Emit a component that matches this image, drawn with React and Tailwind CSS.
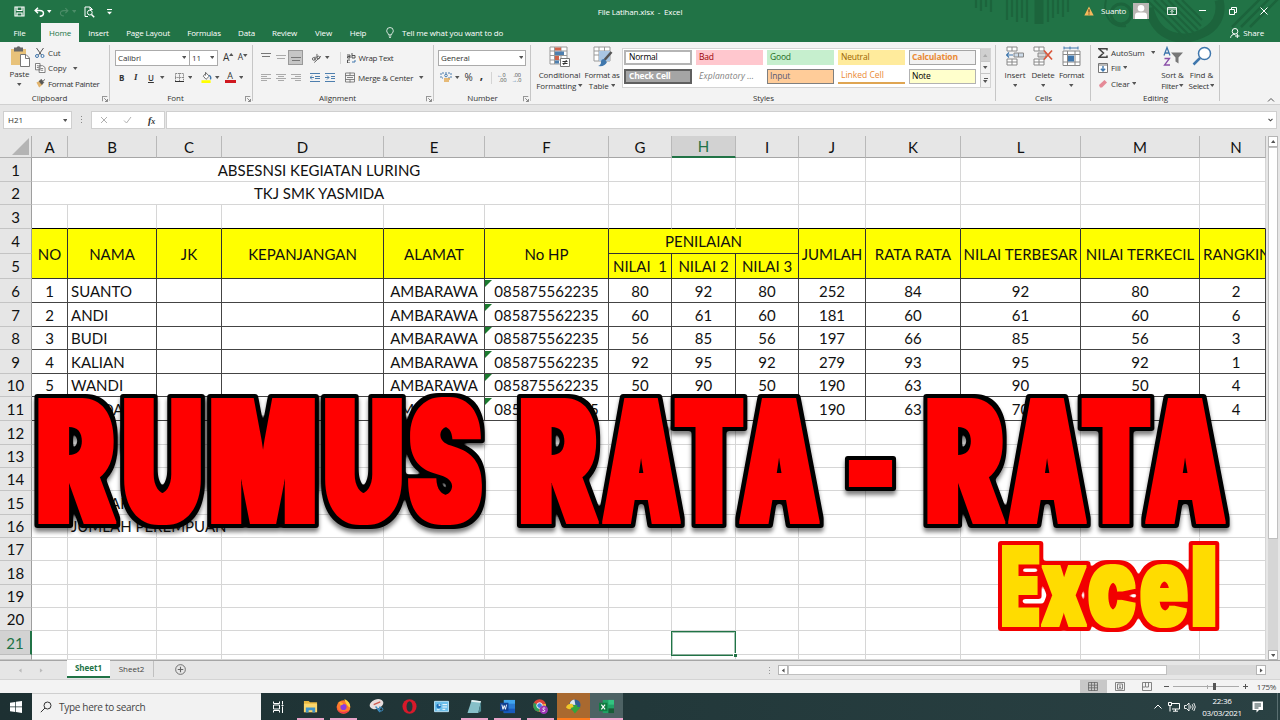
import React from "react";
import clsx from "clsx";

const UI = "font-['Open_Sans','Noto_Sans',sans-serif]";

const Caret = ({className}) => (
    <svg viewBox="0 0 6 4" className={clsx("h-[3px] w-[4.5px] shrink-0 fill-[#555]", className)}>
        <path d="M0 0h6L3 4z"/>
    </svg>
);

const Launcher = () => (
    <svg viewBox="0 0 8 8" className="h-[6px] w-[6px] fill-none stroke-[#666]">
        <path d="M.5 7V.5H7M3 3l4 4M7.3 4v3.3H4"/>
    </svg>
);

/* ---------- title bar and ribbon tabs ---------- */

const TitleArt = () => (
    <svg viewBox="0 0 320 42" className="absolute right-0 top-0 h-[42px] w-[320px] fill-none stroke-[#1c643c]">
        <g strokeWidth="2.2">
            <path d="M16 0v8M21 0v11M26 0v7M31 0v12M47 0v20M52 0v17M57 0v22M62 0v18M67 0v22M88 0v22M93 0v18M98 0v14M103 0v17M108 0v12"/>
        </g>
        <path d="M79 0v24" strokeWidth="9"/>
        <circle cx="161" cy="14" r="10" strokeWidth="3"/>
        <path d="M146 0c-4 18 8 28 20 26" strokeWidth="2"/>
        <path d="M189 8c8 32 34 34 52 26 14-6 22-18 18-34" strokeWidth="9"/>
        <path d="M187 0l38 38M194 0l36 36M201 0l34 34M208 0l30 30M215 0l26 26M222 0l20 20" strokeWidth="2.2"/>
        <path d="M272 27l28-28M281 27l28-28M290 27l28-28" strokeWidth="2.5"/>
    </svg>
);

const TitleBar = () => (
    <div className="relative flex h-[23px] items-center text-[8px] text-white">
        <div className="flex w-[120px] items-center pl-[14px]">
            <svg viewBox="0 0 11 11" className="h-[11px] w-[11px] fill-none stroke-white">
                <path d="M1 1h9v9H1zM3 1v3.5h5V1M3 10V7h5v3" strokeWidth="1.2"/>
            </svg>
            <svg viewBox="0 0 11 10" className="ml-[9px] h-[10px] w-[11px] fill-none stroke-white">
                <path d="M4 .8L1.2 3.5 4 6.2M1.5 3.5h4.2c5 0 5 5.8 0 5.8" strokeWidth="1.5"/>
            </svg>
            <Caret className="ml-[2px] !fill-white"/>
            <svg viewBox="0 0 11 10" className="ml-[7px] h-[10px] w-[10px] fill-none stroke-[#4c8d68]">
                <path d="M7 .8l2.8 2.7L7 6.2M9.5 3.5H5.3c-5 0-5 5.8 0 5.8" strokeWidth="1.2"/>
            </svg>
            <Caret className="ml-[3px] !fill-[#4c8d68]"/>
            <svg viewBox="0 0 11 12" className="ml-[8px] h-[12px] w-[11px] fill-none stroke-white">
                <path d="M4 10.5H1V1h5l2.5 2.5M6 1v2.5h2.5"/>
                <circle cx="5.8" cy="6.6" r="2.4"/>
                <path d="M7.5 8.4l2.7 2.8" strokeWidth="1.5"/>
            </svg>
            <svg viewBox="0 0 5 6" className="ml-[12px] h-[6px] w-[5px] shrink-0 fill-white">
                <path d="M0 0h5v1H0zM0 2.8h5L2.5 5.4z"/>
            </svg>
        </div>
        <div className="flex-1 text-center tracking-[-0.15px]"><span className="whitespace-pre">File Latihan.xlsx  -  Excel</span></div>
        <div className="w-[120px]"/>
        <div className="absolute right-0 top-0 flex h-[21px] w-[196px] items-center">
            <svg viewBox="0 0 10 10" className="h-[10px] w-[10px]">
                <path d="M5 .5L9.7 9.5H.3z" fill="#f5b95c"/>
                <path d="M5 3.2v3.4M5 7.4v1.2" stroke="#4a3a1a" strokeWidth="1.1"/>
            </svg>
            <span className="ml-[7px] w-[32px] tracking-[-0.2px]">Suanto</span>
            <svg viewBox="0 0 16 16" className="h-[16px] w-[16px]">
                <path d="M0 0h16v16H0z" fill="#b9b6b3"/>
                <circle cx="8" cy="5.2" r="3.3" fill="#fff"/>
                <path d="M2 16v-3.500q0-3 3-3h6q3 0 3 3V16z" fill="#fff"/>
            </svg>
            <svg viewBox="0 0 10 8" className="ml-[18px] h-[8px] w-[10px] fill-none stroke-white">
                <path d="M.5.5h9v7h-9zM.5 2h9M5 6.800V3.500M3.500 4.800L5 3.300l1.500 1.500" strokeWidth=".9"/>
            </svg>
            <div className="ml-[22px] h-px w-[7px] bg-white"/>
            <svg viewBox="0 0 8 8" className="ml-[23px] h-[8px] w-[8px] fill-none stroke-white">
                <path d="M.5 2.500h5v5h-5zM2.500 2.500V.5h5v5h-2"/>
            </svg>
            <svg viewBox="0 0 8 8" className="ml-[23px] h-[8px] w-[8px] fill-none stroke-white">
                <path d="M.5.5l7 7M7.500.5l-7 7"/>
            </svg>
        </div>
    </div>
);

const tabs = [
    ["File", "w-[41px] pr-[2px]"],
    ["Home", "w-[38px] bg-[#f3f3f3] !text-[#217346]"],
    ["Insert", "w-[39px]"],
    ["Page Layout", "w-[60px]"],
    ["Formulas", "w-[52px]"],
    ["Data", "w-[33px]"],
    ["Review", "w-[43px]"],
    ["View", "w-[35px]"],
    ["Help", "w-[34px]"],
];

const RibbonTabs = () => (
    <div className="relative flex h-[19px] items-center text-[8px] tracking-[-0.15px] text-white">
        {tabs.map(([name, cls]) => (
            <div key={name} className={clsx("flex h-[19px] items-center justify-center whitespace-nowrap", cls)}>
                {name}
            </div>
        ))}
        <svg viewBox="0 0 8 11" className="ml-[11px] h-[11px] w-[8px] fill-none stroke-white">
            <path d="M2.500 7.800C2.500 6.300.7 5.800.7 3.800a3.300 3.300 0 016.600 0c0 2-1.800 2.500-1.800 4zM2.700 9h2.600M3 10.400h2" strokeWidth=".8"/>
        </svg>
        <span className="ml-[8px]">Tell me what you want to do</span>
        <div className="absolute right-[16px] flex items-center gap-[3px]">
            <svg viewBox="0 0 10 10" className="h-[10px] w-[10px] fill-none stroke-white">
                <circle cx="5" cy="3.300" r="2.800"/>
                <path d="M.6 9.800C.8 7.500 2.500 6.200 5 6.200M5 8h4.500M7.300 5.800v4.200"/>
            </svg>
            <span>Share</span>
        </div>
    </div>
);

/* ---------- ribbon ---------- */

const Group = ({label, launcher, className, children}) => (
    <div className={clsx("relative flex h-[62px] shrink-0 flex-col whitespace-nowrap pt-[4px]", className)}>
        <div className="flex-1">{children}</div>
        <div className="flex h-[12px] items-center justify-center pb-[1px] text-[#333]">{label}</div>
        {launcher && <div className="absolute bottom-[2px] right-[2px] flex"><Launcher/></div>}
        <div className="absolute bottom-[3px] right-0 top-[3px] w-px bg-[#c6c6c6]"/>
    </div>
);

const ClipboardGroup = () => (
    <Group label="Clipboard" launcher className="w-[110px] pr-[11px]">
        <div className="flex">
            <div className="flex w-[35px] shrink-0 flex-col items-center pl-[4px]">
                <svg viewBox="0 0 20 21" className="h-[21px] w-[20px]">
                    <path d="M1 3h15v16H1z" fill="#e8c27a"/>
                    <path d="M4 1.500h2.500q2-2.500 4 0H13v4H4z" fill="#666"/>
                    <path d="M10.500 8.500h5.500l3.500 3.500v8.500h-9z" fill="#fff" stroke="#777"/>
                    <path d="M15.500 8.500v4h4" fill="none" stroke="#777"/>
                </svg>
                <span className="mt-[1px]">Paste</span>
                <Caret className="mt-[3px]"/>
            </div>
            <div className="flex flex-col">
                <div className="flex h-[14px] items-center gap-[3px]">
                    <svg viewBox="0 0 10 10" className="h-[10px] w-[10px] fill-none">
                        <path d="M1.500 0l5 7M8.500 0l-5 7" stroke="#555"/>
                        <circle cx="2" cy="8" r="1.500" stroke="#3f77ad"/>
                        <circle cx="7.500" cy="8" r="1.500" stroke="#3f77ad"/>
                    </svg>
                    Cut
                </div>
                <div className="flex h-[16px] items-center gap-[2px]">
                    <svg viewBox="0 0 12 11" className="h-[10px] w-[11px] fill-white stroke-[#666]">
                        <path d="M.5.5h5v7h-5zM4.500 3h4l2.500 2v5.500H4.500zM2 3h2M2 5h2M6 6h3M6 8h3" strokeWidth=".9"/>
                    </svg>
                    Copy <Caret className="ml-[5px]"/>
                </div>
                <div className="flex h-[15px] items-center gap-[2px] tracking-[-0.3px]">
                    <svg viewBox="0 0 11 10" className="h-[9px] w-[11px]">
                        <path d="M1 4l4-2 3 4-4 3.500z" fill="#e2b36b"/>
                        <path d="M4 2.500L6.500.5 9 4 7 6zM8.500 2L10.500.5" fill="#555" stroke="#555"/>
                    </svg>
                    Format Painter
                </div>
            </div>
        </div>
    </Group>
);

const Sep = ({className}) => <div className={clsx("h-[12px] w-px bg-[#d4d4d4]", className)}/>;

const FontGroup = () => (
    <Group label="Font" launcher className="w-[143px] pr-[12px]">
        <div className="flex h-[23px] items-center pl-[5px]">
            <div className="flex h-[16px] w-[75px] shrink-0 items-center justify-between border border-[#ababab] bg-white pl-[2px] pr-[3px]">Calibri <Caret/></div>
            <div className="-ml-px flex h-[16px] w-[29px] shrink-0 items-center justify-between border border-[#ababab] bg-white pl-[2px] pr-[3px]">11 <Caret/></div>
            <span className="ml-[5px] text-[10px]">A</span>
            <Caret className="mb-[6px] rotate-180"/>
            <span className="ml-[4px] text-[8.500px]">A</span>
            <Caret className="mb-[5px]"/>
        </div>
        <div className="flex h-[17px] items-center pl-[9px]">
            <b className="w-[15px] shrink-0">B</b>
            <i className="w-[14px] shrink-0 font-['Liberation_Serif',serif] text-[9px] font-bold">I</i>
            <span className="w-[12px] shrink-0 font-semibold underline">U</span>
            <Caret/>
            <Sep className="ml-[5px]"/>
            <svg viewBox="0 0 9 9" className="ml-[5px] h-[9px] w-[9px] shrink-0 fill-none stroke-[#888]">
                <path d="M.5.5h8v8h-8zM4.500 0v9M0 4.500h9" strokeDasharray="1.500 .7"/>
                <path d="M0 8.500h9" stroke="#333"/>
            </svg>
            <Caret className="ml-[4px]"/>
            <Sep className="ml-[5px]"/>
            <svg viewBox="0 0 11 12" className="ml-[4px] h-[11px] w-[11px] shrink-0">
                <path d="M2 4.500L5 1l3.500 3.500L5 8zM4.500 0v4" fill="#fff" stroke="#666"/>
                <path d="M8.500 3.500c2 1.500 2 3 1.200 4.500" fill="none" stroke="#3f77ad" strokeWidth="1.500"/>
                <path d="M0 9h10v3H0z" fill="#ff0"/>
            </svg>
            <Caret className="ml-[3px]"/>
            <span className="ml-[5px] flex h-[11px] w-[11px] shrink-0 items-center justify-center border-b-[3px] border-[#d0181f] text-[9px] leading-[8px]">A</span>
            <Caret className="ml-[3px]"/>
        </div>
    </Group>
);

const Lines = ({d, className}) => (
    <svg viewBox="0 0 10 9" className={clsx("h-[9px] w-[10px] shrink-0 fill-none stroke-[#777]", className)}>
        <path d={d}/>
    </svg>
);

const AlignmentGroup = () => (
    <Group label="Alignment" launcher className="w-[181px] pr-[12px]">
        <div className="flex h-[23px] items-center pl-[8px]">
            <Lines d="M0 1.500h10M1 4.500h8" className="mb-[3px]"/>
            <Lines d="M0 2.500h10M1 5.500h8" className="ml-[5px] !stroke-[#aaa]"/>
            <div className="ml-[2px] flex h-[15px] w-[15px] items-center justify-center border border-[#999] bg-[#c6c6c6]">
                <Lines d="M0 4.500h10M1 7.500h8"/>
            </div>
            <svg viewBox="0 0 11 11" className="ml-[8px] h-[10px] w-[11px] fill-none stroke-[#555]">
                <path d="M1 6.500a1.500 1.500 0 103 0 1.500 1.500 0 10-3 0M4 4v4M6 1v5M6 5a1.500 1.500 0 103 0 1.500 1.500 0 10-3 0M3 10.500l7.500-7"/>
            </svg>
            <Caret className="ml-[3px]"/>
            <Sep className="ml-[10px]"/>
            <svg viewBox="0 0 9 10" className="ml-[6px] h-[10px] w-[9px] fill-none stroke-[#444]">
                <path d="M0 2h3v3H.5V3.500H3M5 0v5h3V2.500H5M3 7H.5v3H3" strokeWidth=".9"/>
                <path d="M5 9h3V7" stroke="#3f77ad"/>
            </svg>
            <span className="ml-[3px] tracking-[-0.35px]">Wrap Text</span>
        </div>
        <div className="flex h-[17px] items-center pl-[8px]">
            <Lines d="M0 1.500h10M0 3.500h6M0 5.500h10M0 7.500h6" className="!stroke-[#aaa]"/>
            <Lines d="M0 1.500h10M2 3.500h6M0 5.500h10M2 7.500h6" className="ml-[5px] !stroke-[#aaa]"/>
            <Lines d="M0 1.500h10M4 3.500h6M0 5.500h10M4 7.500h6" className="ml-[5px] !stroke-[#aaa]"/>
            <Sep className="ml-[4px]"/>
            <Lines d="M0 .5h10M5 3.500h5M5 5.500h5M0 8.500h10M4 4.500H0M2 2.500l-2 2 2 2" className="ml-[5px] !stroke-[#4e7fae]"/>
            <Lines d="M0 .5h10M6 3.500h4M6 5.500h4M0 8.500h10M0 4.500h4M2 2.500l2 2-2 2" className="ml-[5px] !stroke-[#4e7fae]"/>
            <Sep className="ml-[5px]"/>
            <svg viewBox="0 0 10 10" className="ml-[5px] h-[11px] w-[10px] shrink-0 fill-none stroke-[#777]">
                <path d="M.5.5h9v9h-9zM0 3h10M0 7h10M5 0v3M5 7v3M2 5h6" strokeWidth=".9"/>
            </svg>
            <span className="ml-[3px] tracking-[-0.25px]">Merge &amp; Center</span>
            <Caret className="ml-[6px]"/>
        </div>
    </Group>
);

const NumberGroup = () => (
    <Group label="Number" launcher className="w-[97px]">
        <div className="flex h-[23px] items-center pl-[4px]">
            <div className="flex h-[16px] w-[88px] items-center justify-between border border-[#ababab] bg-white px-[2px]">General <Caret/></div>
        </div>
        <div className="flex h-[17px] items-center pl-[6px]">
            <svg viewBox="0 0 12 11" className="h-[11px] w-[12px] fill-none">
                <path d="M1 3V1h10v5H8M1 4v2h2" stroke="#4e7fae" strokeDasharray="2 1"/>
                <circle cx="6" cy="3.500" r="1.300" stroke="#4e7fae"/>
                <path d="M4 7h6M4 9h5" stroke="#e2a84f" strokeWidth="1.600"/>
            </svg>
            <Caret className="ml-[3px]"/>
            <span className="ml-[5px] text-[10px]">%</span>
            <b className="ml-[7px] pb-[5px] text-[12px] leading-none">,</b>
            <Sep className="ml-[8px]"/>
            <div className="ml-[5px] flex flex-col text-[5.500px] leading-[5px] text-[#444]"><span><span className="text-[#3f77ad]">←</span>0</span><span className="pl-[2px]">.00</span></div>
            <div className="ml-[5px] flex flex-col text-[5.500px] leading-[5px] text-[#444]"><span className="pl-[2px]">.00</span><span><span className="text-[#3f77ad]">→</span>.0</span></div>
        </div>
    </Group>
);

const cellStyles = [
    ["Normal", "border-2 border-[#b5b5b5] bg-white text-black px-[2px]"],
    ["Bad", "bg-[#ffc7ce] text-[#9c0006]"],
    ["Good", "bg-[#c6efce] text-[#1d6b22]"],
    ["Neutral", "bg-[#ffeb9c] text-[#9c6500]"],
    ["Calculation", "border border-[#a5a5a5] bg-[#f2f2f2] font-bold text-[#ea8a35] !px-[2px]"],
    ["Check Cell", "border-2 border-[#5f5f5f] bg-[#a5a5a5] font-bold text-white px-[1px]"],
    ["Explanatory ...", "italic text-[#7f7f7f] !tracking-[0.1px]"],
    ["Input", "border border-[#7f7f7f] bg-[#ffcc99] text-[#5a5a76] !px-[2px]"],
    ["Linked Cell", "border-b-2 border-[#dfa552] text-[#ea8a35] !tracking-[0px]"],
    ["Note", "border border-[#b2b2b2] bg-[#ffffcc] text-black !px-[2px]"],
];

const StylesGroup = () => (
    <Group label="Styles" className="w-[465px]">
        <div className="flex items-start pl-[5px]">
            <div className="flex w-[47px] flex-col items-center text-center leading-[10.500px]">
                <svg viewBox="0 0 21 21" className="h-[21px] w-[21px]">
                    <path d="M1 1h17v17H1zM1 5h17M1 9.500h17M1 14h17M5.500 1v17M12 1v17" fill="#fff" stroke="#999"/>
                    <path d="M6 1.500h6v3H6zM6 10h4v4H6z" fill="#d1634a"/>
                    <path d="M6 5.500h9v3.500H6zM6 14.500h4v3H6z" fill="#4e7fae"/>
                    <path d="M11.500 12.500h9v8h-9z" fill="#fff" stroke="#777"/>
                    <path d="M13.500 15.500h5M13.500 17.500h5M17.500 14l-3 5" stroke="#333"/>
                </svg>
                <span className="mt-[3px]">Conditional</span>
                <span className="flex items-center gap-[2px]">Formatting <Caret/></span>
            </div>
            <div className="flex w-[38px] flex-col items-center text-center leading-[10.500px]">
                <svg viewBox="0 0 21 21" className="h-[21px] w-[21px]">
                    <path d="M2 1h16v14H2zM2 5h16M2 9h16M7 1v14M12.500 1v14" fill="#fff" stroke="#999"/>
                    <path d="M7 5h11v10H7z" fill="#a9c6e3"/>
                    <path d="M19.500 6l-7 8" stroke="#555" strokeWidth="2.500"/>
                    <path d="M12 13l3 3q-2 5-9 4 3-1 3-4t3-3z" fill="#3f77ad"/>
                </svg>
                <span className="mt-[3px] tracking-[-0.25px]">Format as</span>
                <span className="flex items-center gap-[2px]">Table <Caret/></span>
            </div>
            <div className="ml-[1px] mt-[2px] flex border border-[#d4d4d4] bg-white">
                <div className="grid grid-cols-[68px_67px_67px_67px_67px] gap-x-[4px] gap-y-[4px] pb-[3px] pl-px pr-[4px] pt-px">
                    {cellStyles.map(([name, cls]) => (
                        <div key={name} className={clsx("flex h-[15px] items-center overflow-hidden px-[3px] text-[8.500px] tracking-[-0.2px]", cls)}>{name}</div>
                    ))}
                </div>
                <div className="flex w-[10px] flex-col border-l border-[#c6c6c6] bg-[#f3f3f3]">
                    <div className="flex h-[12px] items-center justify-center bg-[#d0d0d0]"><Caret className="rotate-180 !fill-[#aaa]"/></div>
                    <div className="flex h-[13px] items-center justify-center border-y border-[#c6c6c6]"><Caret/></div>
                    <div className="flex flex-1 flex-col items-center justify-center gap-px"><div className="h-px w-[4px] bg-[#555]"/><Caret/></div>
                </div>
            </div>
        </div>
    </Group>
);

const CellsGroup = () => (
    <Group label="Cells" className="w-[95px]">
        <div className="flex pl-[5px]">
            <div className="flex w-[28px] flex-col items-center">
                <svg viewBox="0 0 18 20" className="h-[21px] w-[18px] fill-white stroke-[#888]">
                    <path d="M1 .5h10v4H1zM6 .5v4M1 12.500h10v6H1zM6 12.500v6M1 15.500h10"/>
                    <path d="M8 6.500h9.500v4H8zM12.500 6.500v4" fill="#cddbe9"/>
                    <path d="M7 8.500H0M3 6L.5 8.500 3 11" fill="none" stroke="#3f77ad" strokeWidth="1.200"/>
                </svg>
                <span className="mt-[2px]">Insert</span><Caret className="mt-[3px]"/>
            </div>
            <div className="flex w-[28px] flex-col items-center">
                <svg viewBox="0 0 20 20" className="h-[21px] w-[20px] fill-white stroke-[#888]">
                    <path d="M1 .5h10v4H1zM6 .5v4M1 12.500h10v6H1zM6 12.500v6M1 15.500h10"/>
                    <path d="M5 6.500h8v4H5z" fill="#d8d8d8"/>
                    <path d="M11 4l8 9M19 4l-8 9" stroke="#d9563a" strokeWidth="1.700"/>
                </svg>
                <span className="mt-[2px] tracking-[-0.2px]">Delete</span><Caret className="mt-[3px]"/>
            </div>
            <div className="flex w-[29px] flex-col items-center">
                <svg viewBox="0 0 19 20" className="h-[21px] w-[19px] fill-white stroke-[#888]">
                    <path d="M1 4.500h17v14.500H1zM1 8h17M1 15.500h17M5.500 4.500V19M13 4.500V19"/>
                    <path d="M6 9h6v6H6z" fill="#3f77ad" stroke="none"/>
                    <path d="M2 1.500h14M2 0v3M16 0v3M8 0v3" fill="none" stroke="#3f77ad"/>
                </svg>
                <span className="mt-[2px] tracking-[-0.3px]">Format</span><Caret className="mt-[3px]"/>
            </div>
        </div>
    </Group>
);

const EditingGroup = () => (
    <Group label="Editing" className="w-[129px]">
        <div className="flex pl-[7px]">
            <div className="flex w-[60px] flex-col">
                <div className="flex h-[13px] items-center gap-[3px]">
                    <svg viewBox="0 0 10 10" className="h-[10px] w-[10px] fill-none stroke-[#444]"><path d="M9 2.500V.8H1L5.500 5 1 9.200h8V7.500" strokeWidth="1.500"/></svg>
                    AutoSum <Caret className="ml-[3px]"/>
                </div>
                <div className="flex h-[17px] items-center gap-[2px]">
                    <svg viewBox="0 0 10 10" className="mr-px h-[10px] w-[10px] fill-white stroke-[#777]"><path d="M.5.5h9v9h-9zM0 2h10"/><path d="M5 3v5M2.800 5.800L5 8l2.200-2.200" fill="none" stroke="#3f77ad" strokeWidth="1.400"/></svg>
                    Fill <Caret/>
                </div>
                <div className="flex h-[15px] items-center gap-[2px]">
                    <svg viewBox="0 0 10 8" className="mr-px h-[8px] w-[10px]"><path d="M1 5l5.500-5L9 2.500 4 7.500H2z" fill="#e58a97"/></svg>
                    Clear <Caret/>
                </div>
            </div>
            <div className="flex w-[29px] flex-col items-center leading-[10.500px]">
                <svg viewBox="0 0 20 20" className="h-[21px] w-[20px] fill-none">
                    <path d="M1 9l3-8 3 8M2 6.500h4" stroke="#3f77ad" strokeWidth="1.300"/>
                    <path d="M1.500 12h5l-5 6.500h5.500" stroke="#8a4fa8" strokeWidth="1.300"/>
                    <path d="M8 6h12l-4.500 5v6l-3-2v-4z" fill="#777"/>
                </svg>
                <span className="mt-[3px]">Sort &amp;</span>
                <span className="flex items-center gap-[1px] tracking-[-0.3px]">Filter <Caret/></span>
            </div>
            <div className="flex w-[29px] flex-col items-center leading-[10.500px]">
                <svg viewBox="0 0 20 20" className="h-[21px] w-[20px] fill-white">
                    <circle cx="12.500" cy="7" r="6" stroke="#3f77ad" strokeWidth="1.500"/>
                    <path d="M8 11.500L1.500 18" stroke="#3f77ad" strokeWidth="2.500"/>
                </svg>
                <span className="mt-[3px]">Find &amp;</span>
                <span className="flex items-center gap-[1px] tracking-[-0.3px]">Select <Caret/></span>
            </div>
        </div>
    </Group>
);

const Ribbon = () => (
    <div className="relative flex h-[63px] border-b border-[#d0d0d0] bg-[#f3f3f3] text-[8px] tracking-[-0.1px] text-[#333]">
        <ClipboardGroup/>
        <FontGroup/>
        <AlignmentGroup/>
        <NumberGroup/>
        <StylesGroup/>
        <CellsGroup/>
        <EditingGroup/>
        <svg viewBox="0 0 8 5" className="absolute bottom-[2px] right-[5px] h-[5px] w-[8px] fill-none stroke-[#555]"><path d="M1 4.500l3-3 3 3"/></svg>
    </div>
);

const FormulaBar = () => (
    <div className="flex h-[31px] items-start bg-[#e6e6e6] pt-[6px] text-[8px] text-[#333]">
        <div className="ml-[3px] flex h-[18px] w-[69px] items-center justify-between border border-[#cfcfcf] bg-white pl-[4px] pr-[4px]">H21 <Caret/></div>
        <div className="ml-[9px] mt-[5px] flex flex-col gap-[2px]">
            <i className="h-px w-px bg-[#888]"/><i className="h-px w-px bg-[#888]"/><i className="h-px w-px bg-[#888]"/>
        </div>
        <div className="ml-[9px] flex h-[18px] w-[74px] items-center border border-[#cfcfcf] bg-white">
            <svg viewBox="0 0 8 8" className="ml-[8px] h-[8px] w-[8px] fill-none stroke-[#b0b0b0]"><path d="M1 1l6 6M7 1L1 7"/></svg>
            <svg viewBox="0 0 9 8" className="ml-[15px] h-[8px] w-[9px] fill-none stroke-[#b0b0b0]"><path d="M1 4.500L3.500 7 8 1"/></svg>
            <i className="ml-[16px] font-['Liberation_Serif',serif] text-[10px] font-bold">f<span className="text-[8px]">x</span></i>
        </div>
        <div className="ml-[1px] flex h-[18px] w-[1111px] items-center justify-end border border-[#cfcfcf] bg-white pr-[3px]">
            <svg viewBox="0 0 6 5" className="h-[4px] w-[5px] fill-none stroke-[#444]"><path d="M.5 1L3 3.500 5.500 1" strokeWidth="1.300"/></svg>
        </div>
    </div>
);

/* ---------- worksheet ---------- */

const columns = [
    ["A", "w-[36px]"], ["B", "w-[89px]"], ["C", "w-[65px]"], ["D", "w-[162px]"], ["E", "w-[101px]"],
    ["F", "w-[124px]"], ["G", "w-[63px]"], ["H", "w-[64px]"], ["I", "w-[63px]"], ["J", "w-[67px]"],
    ["K", "w-[95px]"], ["L", "w-[120px]"], ["M", "w-[119px]"], ["N", "w-[66px]"],
];

const students = [
    ["h-[24px]", 1, "SUANTO", 80, 92, 80, 252, 84, 92, 80, 2],
    ["h-[24px]", 2, "ANDI", 60, 61, 60, 181, 60, 61, 60, 6],
    ["h-[23px]", 3, "BUDI", 56, 85, 56, 197, 66, 85, 56, 3],
    ["h-[24px]", 4, "KALIAN", 92, 95, 92, 279, 93, 95, 92, 1],
    ["h-[23px]", 5, "WANDI", 50, 90, 50, 190, 63, 90, 50, 4],
    ["h-[24px]", 6, "WINDA", 60, 60, 70, 190, 63, 70, 60, 4],
];

const blankRows = [
    [12, "h-[24px]"], [13, "h-[23px]"], [14, "h-[23px]"], [15, "h-[24px]", "JUMLAH LAKI"],
    [16, "h-[23px]", "JUMLAH PEREMPUAN"], [17, "h-[23px]"], [18, "h-[24px]"], [19, "h-[23px]"],
    [20, "h-[23px]"], [21, "h-[24px]"], ["", "h-[5px]"],
];

const Td = ({className, children, ...rest}) => (
    <td className={clsx("whitespace-nowrap border-b border-r p-0 text-center", className || "border-[#d6d6d6]")} {...rest}>{children}</td>
);

const RowHead = ({n}) => (
    <th className={clsx(
        "border-b border-r p-0 text-center font-normal",
        n === 21 ? "border-b-[#bdbdbd] border-r-2 border-r-[#217346] bg-[#d2d2d2] text-[#217346]" : "border-b-[#c4c4c4] border-r-[#9e9e9e] bg-[#e6e6e6]"
    )}>{n}</th>
);

const head = "border-[#333] bg-[#ffff00]";
const data = "border-[#444]";

const Sheet = () => (
    <table className="w-[1266px] table-fixed border-separate border-spacing-0 font-['Lato',sans-serif] text-[15px] leading-[20px] text-[#111]">
        <colgroup>
            <col className="w-[32px]"/>
            {columns.map(([c, w]) => <col key={c} className={w}/>)}
        </colgroup>
        <tbody>
            <tr className="h-[22px]">
                <th className="border-b border-r border-[#b0b0b0] bg-[#e6e6e6] p-0">
                    <svg viewBox="0 0 17 17" className="ml-[12px] h-[17px] w-[17px] fill-[#b4b4b4]"><path d="M17 0v17H0z"/></svg>
                </th>
                {columns.map(([c]) => (
                    <th key={c} className={clsx(
                        "border-b border-r p-0 font-normal",
                        c === "N" && "pl-[7px]",
                        c === "H" ? "border-b-2 border-b-[#217346] border-r-[#b9b9b9] bg-[#d2d2d2] text-[#217346]" : "border-b-[#a6a6a6] border-r-[#b9b9b9] bg-[#e6e6e6]"
                    )}>{c}</th>
                ))}
            </tr>
            {[[1, "h-[24px]", "ABSESNSI KEGIATAN LURING"], [2, "h-[23px]", "TKJ SMK YASMIDA"]].map(([n, h, title]) => (
                <tr key={n} className={h}>
                    <RowHead n={n}/>
                    <Td colSpan={6}><span className="mr-[2px]">{title}</span></Td>
                    {columns.slice(6).map(([c]) => <Td key={c}/>)}
                </tr>
            ))}
            <tr className="h-[24px]">
                <RowHead n={3}/>
                {columns.map(([c]) => <Td key={c} className="border-b-black border-r-[#d6d6d6]"/>)}
            </tr>
            <tr className="h-[25px]">
                <RowHead n={4}/>
                {["NO", "NAMA", "JK", "KEPANJANGAN", "ALAMAT", "No HP"].map((t) => <Td key={t} rowSpan={2} className={head}>{t}</Td>)}
                <Td colSpan={3} className={head}>PENILAIAN</Td>
                {["JUMLAH", "RATA RATA", "NILAI TERBESAR", "NILAI TERKECIL"].map((t) => <Td key={t} rowSpan={2} className={head}>{t}</Td>)}
                <Td rowSpan={2} className={head}><div className="overflow-hidden pl-[3px] text-left">RANGKING</div></Td>
            </tr>
            <tr className="h-[25px]">
                <RowHead n={5}/>
                <Td className={head}><span className="whitespace-pre">NILAI  1</span></Td>
                <Td className={head}>NILAI 2</Td>
                <Td className={head}>NILAI 3</Td>
            </tr>
            {students.map(([h, no, name, ...marks]) => (
                <tr key={no} className={h}>
                    <RowHead n={no + 5}/>
                    <Td className={data}>{no}</Td>
                    <Td className={data}><div className="pl-[3px] text-left">{name}</div></Td>
                    <Td className={data}/>
                    <Td className={data}/>
                    <Td className={data}>AMBARAWA</Td>
                    <Td className={data}>
                        <div className="relative">
                            085875562235
                            <svg viewBox="0 0 7 7" className="absolute -top-[1px] left-0 h-[7px] w-[7px] fill-[#1a7a2e]"><path d="M0 0h7L0 7z"/></svg>
                        </div>
                    </Td>
                    {marks.map((m, i) => <Td key={i} className={clsx(data, i === 7 && "pl-[7px]")}>{m}</Td>)}
                </tr>
            ))}
            {blankRows.map(([n, h, text]) => (
                <tr key={n} className={h}>
                    <RowHead n={n}/>
                    {columns.map(([c]) => (
                        <Td key={c}>
                            {c === "B" && text && <div className="w-0 pl-[3px] text-left">{text}</div>}
                            {c === "H" && n === 21 && (
                                <div className="relative h-[22px]">
                                    <div className="absolute -bottom-[2px] -left-[1px] -right-[1px] -top-[1px] border border-[#217346] ring-1 ring-inset ring-[#217346]/40"/>
                                    <div className="absolute -bottom-[3px] -right-[2px] h-[4px] w-[4px] border-l border-t border-white bg-[#217346]"/>
                                </div>
                            )}
                        </Td>
                    ))}
                </tr>
            ))}
        </tbody>
    </table>
);

const VerticalScroll = () => (
    <div className="flex w-[14px] flex-col items-center bg-[#e6e6e6]">
        <div className="flex h-[11px] w-[10px] items-center justify-center border border-[#b5b5b5] bg-white"><Caret className="rotate-180"/></div>
        <div className="h-[392px] w-[10px] border border-[#c0c0c0] bg-white"/>
        <div className="w-[10px] flex-1 bg-[#d6d6d6]"/>
        <div className="flex h-[10px] w-[10px] items-center justify-center border border-[#b5b5b5] bg-white"><Caret/></div>
    </div>
);

const SheetTabs = () => (
    <div className="flex h-[19px] border-t border-[#a6a6a6] bg-[#e6e6e6] text-[8px] text-[#444]">
        <div className="flex w-[67px] items-center gap-[16px] pl-[18px]">
            <Caret className="rotate-90 !fill-[#bbb]"/>
            <Caret className="-rotate-90 !fill-[#bbb]"/>
        </div>
        <div className="-mt-px flex h-[18px] w-[43px] items-center justify-center border-b-2 border-[#217346] bg-white font-bold text-[#217346]">Sheet1</div>
        <div className="flex h-[16px] w-[44px] items-center justify-center border-r border-[#c0c0c0]">Sheet2</div>
        <svg viewBox="0 0 12 12" className="ml-[21px] mt-[3px] h-[11px] w-[11px] fill-none stroke-[#666]"><circle cx="6" cy="6" r="5.300"/><path d="M3 6h6M6 3v6" strokeWidth="1.200"/></svg>
        <div className="ml-auto flex items-center pr-[14px]">
            <div className="mr-[8px] flex flex-col gap-[2px]"><i className="h-px w-px bg-[#999]"/><i className="h-px w-px bg-[#999]"/><i className="h-px w-px bg-[#999]"/></div>
            <div className="flex h-[10px] w-[10px] items-center justify-center border border-[#b5b5b5] bg-white"><Caret className="rotate-90"/></div>
            <div className="h-[10px] w-[379px] border border-[#c0c0c0] bg-white"/>
            <div className="h-[10px] w-[89px] bg-[#d9d9d9]"/>
            <div className="flex h-[10px] w-[10px] items-center justify-center border border-[#b5b5b5] bg-white"><Caret className="-rotate-90"/></div>
        </div>
    </div>
);

const StatusBar = () => (
    <div className="flex h-[14px] items-center justify-end border-t border-[#d4d4d4] bg-[#f3f3f3] pr-[4px] text-[8px] text-[#444]">
        <div className="flex h-[14px] w-[27px] items-center justify-center bg-[#c8c8c8]">
            <svg viewBox="0 0 10 9" className="h-[9px] w-[10px] fill-none stroke-[#666]"><path d="M.5.5h9v8h-9zM0 3.200h10M0 5.800h10M3.500 0v9M6.500 0v9" strokeWidth=".8"/></svg>
        </div>
        <svg viewBox="0 0 10 9" className="ml-[8px] h-[9px] w-[10px] fill-none stroke-[#777]"><path d="M.5.5h9v8h-9zM2.500 2h5v5h-5zM4 4h2M4 5.500h2" strokeWidth=".9"/></svg>
        <svg viewBox="0 0 10 9" className="ml-[17px] h-[9px] w-[10px] fill-none stroke-[#777]"><path d="M.5.5h9v8h-9zM3.500 0v5h3V0M0 5h3" strokeWidth=".9"/></svg>
        <div className="ml-[12px] h-px w-[5px] bg-[#555]"/>
        <div className="ml-[4px] flex h-[8px] w-[66px] items-center">
            <div className="h-px w-[34px] bg-[#aaa]"/>
            <div className="h-[4px] w-px bg-[#aaa]"/>
            <div className="h-px w-[5px] bg-[#aaa]"/>
            <div className="h-[7px] w-[3px] bg-[#555]"/>
            <div className="h-px flex-1 bg-[#aaa]"/>
        </div>
        <svg viewBox="0 0 5 5" className="ml-[4px] h-[5px] w-[5px] stroke-[#555]"><path d="M0 2.500h5M2.500 0v5"/></svg>
        <span className="ml-[9px] tracking-[-0.3px]">175%</span>
    </div>
);

/* ---------- taskbar ---------- */

const apps = [
    ["explorer", "w-[33px]", "pink", <g>
        <path d="M1 2h5l1.500 1.500H15V14H1z" fill="#e9b73f"/><path d="M1 5h14v9H1z" fill="#fbd66c"/>
        <path d="M3 9h10v5.500h-3v-2.500H6v2.500H3z" fill="#3f93c9"/></g>],
    ["firefox", "w-[33px]", "pink", <g>
        <circle cx="8" cy="8.500" r="7.300" fill="#ff7a2c"/><path d="M9 0c4 2 6.500 5 6 9-3-1-5-5-6-9z" fill="#ffd23c"/>
        <path d="M.8 6c0 7 6 9.500 13.500 6-3.500 5.500-14 5-13.500-6z" fill="#f2354f"/>
        <circle cx="8" cy="8.500" r="3.300" fill="#8a3ee0"/><path d="M3 3c2 0 4 1 5 2.500L5 7z" fill="#ffb02e"/></g>],
    ["snip", "w-[33px]", "", <g>
        <ellipse cx="8" cy="5.500" rx="7.500" ry="5" fill="#e8dede" transform="rotate(-20 8 5.500)"/>
        <path d="M5 6l7-3" stroke="#cf5a4e" strokeWidth="1.500"/><path d="M7 8l5 6M12 8l-2 5" stroke="#3f8ec2" strokeWidth="1.500"/><circle cx="13" cy="11" r="1.800" fill="none" stroke="#3f8ec2"/></g>],
    ["opera", "w-[32px]", "", <g>
        <ellipse cx="8" cy="8" rx="7.500" ry="7.800" fill="#d8192a"/><ellipse cx="8" cy="8" rx="3.200" ry="5.600" fill="#20363a"/></g>],
    ["panel", "w-[33px]", "", <g>
        <path d="M.5 2.500h15v11H.5z" fill="#6cbfea" stroke="#bfe6fa"/><circle cx="5" cy="7.500" r="2.500" fill="#1f6fb5"/><path d="M5 7.500V5l2.400 2z" fill="#fff"/><path d="M9 6h5M9 8.500h5M9 11h3M3 11.500h3" stroke="#fff"/></g>],
    ["notes", "w-[33px]", "pink", <g>
        <path d="M5 1l10 1.500-3 12.500H.5z" fill="#86bfc8"/><path d="M5 1l10 1.500-.4 1.500L4.500 3z" fill="#e8f3f4"/><path d="M12 15l3-12.500V13z" fill="#4f8b95"/></g>],
    ["word", "w-[33px]", "pink", <g>
        <path d="M4 1h12v14H4z" fill="#41a5ee"/><path d="M4 5h12v5H4z" fill="#2b7cd3"/><path d="M4 10h12v5H4z" fill="#185abd"/><path d="M0 4h9v9H0z" fill="#103f91"/>
        <path d="M2 6l1.200 5L4.500 7l1.300 4L7 6" fill="none" stroke="#fff"/></g>],
    ["chrome", "w-[33px]", "pink", <g>
        <circle cx="7" cy="7" r="6.800" fill="#e0453a"/><path d="M7 7L1 4a6.800 6.800 0 006 9.800z" fill="#2f9e55"/><path d="M7 7v6.800A6.800 6.800 0 0013.500 5z" fill="#f7c93a"/>
        <circle cx="7" cy="7" r="3" fill="#3f7fe0" stroke="#fff"/><circle cx="11.500" cy="11.500" r="4.500" fill="#9b35b5"/><path d="M13 9.800c-3-1-3 1.500-1.500 1.700s1.500 2.600-1.500 1.700" fill="none" stroke="#fff"/></g>],
    ["idm", "w-[33px] bg-[#a9692f]", "orange", <g>
        <circle cx="9.500" cy="6.500" r="6" fill="#2f5f96"/><path d="M9 .5a6 6 0 00-5 5l6 1z" fill="#dfe8ef"/><path d="M0 9c1-3 4-4.500 7-3.500L9 9l-3 1Q3 12 0 9z" fill="#f0c828"/><path d="M5 9.500l3-1V6.500h4v2h3.500l-6 7z" fill="#33a53c"/></g>],
    ["excel", "w-[33px] bg-[#4d6264]", "pinkfull", <g>
        <path d="M4 1h12v14H4z" fill="#21a366"/><path d="M10 1h6v5h-6z" fill="#33c481"/><path d="M10 10h6v5h-6z" fill="#185c37"/><path d="M0 4h9v9H0z" fill="#107c41"/>
        <path d="M2.500 6l4 5M6.500 6l-4 5" stroke="#fff" strokeWidth="1.200"/></g>],
];

const Taskbar = () => (
    <div className="flex h-[27px] bg-gradient-to-r from-[#1d3032] via-[#22383a] to-[#2a4143]">
        <div className="flex w-[32px] items-center justify-center">
            <svg viewBox="0 0 12 12" className="h-[12px] w-[12px] fill-white"><path d="M0 1.700l5.300-.8v4.700H0zM6 .8l6-.8v5.600H6zM0 6.300h5.300V11L0 10.300zM6 6.300h6V12l-6-.9z"/></svg>
        </div>
        <div className="flex w-[229px] items-center border-t border-[#cfcfcf] bg-[#f2f2f2] pl-[8px] text-[10px] tracking-[-0.3px] text-[#444]">
            <svg viewBox="0 0 12 12" className="h-[12px] w-[12px] fill-none stroke-[#333]"><circle cx="7.500" cy="4.500" r="3.500"/><path d="M5 7L.8 11.200"/></svg>
            <span className="ml-[7px]">Type here to search</span>
        </div>
        <div className="flex w-[33px] items-center justify-center">
            <svg viewBox="0 0 12 12" className="h-[12px] w-[12px] fill-none stroke-white"><path d="M1.500 4h6v4h-6zM1.500.5v2h6v-2M1.500 11.500v-2h6v2M10.500 0v3.500M10.500 5.500v6.500M9.500 4.500h2"/></svg>
        </div>
        {apps.map(([name, cls, line, icon]) => (
            <div key={name} className={clsx("flex flex-col items-center justify-end", cls)}>
                <svg viewBox="0 0 16 16" className="mb-[4px] h-[15px] w-[15px]">{icon}</svg>
                <div className={clsx("h-[2px]", {
                    "w-[27px] bg-[#e9a3c8]": line === "pink",
                    "w-full bg-[#ff7b1c]": line === "orange",
                    "w-full bg-[#f0a6cf]": line === "pinkfull",
                })}/>
            </div>
        ))}
        <div className="ml-auto flex items-center text-[8px] text-white">
            <svg viewBox="0 0 8 5" className="h-[5px] w-[8px] fill-none stroke-white"><path d="M.5 4.500L4 1l3.500 3.500"/></svg>
            <svg viewBox="0 0 12 10" className="ml-[6px] h-[10px] w-[12px] fill-none stroke-white"><path d="M4 1.500h7.500v5.500H4M7.500 7v2M5 9.200h5M.5.5h3v3h-3zM2 3.500v6"/></svg>
            <svg viewBox="0 0 12 10" className="ml-[4px] h-[10px] w-[12px] fill-none stroke-white"><path d="M.5 3.500h2l2.500-2.500v8L2.500 6.500h-2zM6.500 3.500q1 1.500 0 3M8.200 2.200q2 2.800 0 5.600M9.800 1q3 4 0 8" strokeWidth=".9"/></svg>
            <div className="ml-[5px] w-[42px] text-center leading-[12px] tracking-[-0.3px]">22:36<br/>03/03/2021</div>
            <svg viewBox="0 0 12 12" className="ml-[9px] h-[12px] w-[12px]"><path d="M.5.5h10.500v8.500H7L4.500 11.500V9h-4z" fill="#fff"/><path d="M2.500 3h6.500M2.500 5h6.500M2.500 7h4" stroke="#2a4143"/></svg>
            <div className="ml-[13px] mr-[2px] h-[27px] w-px bg-[#5a6f71]"/>
        </div>
    </div>
);

/* ---------- caption lettering: glyph, left edge, stretched advance ---------- */

const words = [
    [["R", 37, 77], ["U", 123, 79], ["M", 210, 106], ["U", 324, 79], ["S", 409, 72]],
    [["R", 519.5, 77], ["A", 604, 75], ["T", 676, 66], ["A", 741, 77]],
    [["-", 846, 49]],
    [["R", 926, 77], ["A", 1010, 75], ["T", 1083, 66], ["A", 1147, 77]],
];
const excel = [["E", 1001, 39], ["x", 1042, 44], ["c", 1088, 48], ["e", 1140, 48], ["l", 1190, 28]];

const Word = ({letters, y}) => (
    <text y={y}>
        {letters.map(([ch, x, len], i) => (
            <tspan key={i} x={x} textLength={len} lengthAdjust="spacingAndGlyphs">{ch}</tspan>
        ))}
    </text>
);

// fattens the letters, then puts a rounded border (and a shadow) behind them
const Outline = ({id, grow, width, fill, border, shadow}) => (
    <filter id={id} x="0" y="360" width="1280" height="300" filterUnits="userSpaceOnUse" colorInterpolationFilters="sRGB">
        <feMorphology in="SourceAlpha" operator="dilate" radius={grow} result="fat"/>
        <feMorphology in="fat" operator="dilate" radius={width}/>
        <feGaussianBlur stdDeviation="1.8"/>
        <feComponentTransfer result="edge"><feFuncA type="linear" slope="4" intercept="-1.5"/></feComponentTransfer>
        <feOffset in="edge" dy="4"/>
        <feGaussianBlur stdDeviation="2"/>
        <feComponentTransfer result="shade"><feFuncA type="linear" slope={shadow}/></feComponentTransfer>
        <feFlood floodColor={border}/>
        <feComposite in2="edge" operator="in" result="borderFill"/>
        <feFlood floodColor={fill}/>
        <feComposite in2="fat" operator="in" result="letterFill"/>
        <feMerge>
            <feMergeNode in="shade"/>
            <feMergeNode in="borderFill"/>
            <feMergeNode in="letterFill"/>
        </feMerge>
    </filter>
);

const Caption = () => (
    <svg viewBox="0 0 1280 720" className="pointer-events-none absolute inset-0 h-[720px] w-[1280px] font-['Inter',sans-serif] font-black">
        <defs>
            <Outline id="title-outline" grow="4 1" width="4" fill="#f00" border="#000" shadow="0.5"/>
            <Outline id="excel-outline" grow="2 1" width="4" fill="#ffdc00" border="#f20000" shadow="0"/>
        </defs>
        <g fontSize="170" filter="url(#title-outline)">
            {words.map((w, i) => <Word key={i} letters={w} y={522.5}/>)}
        </g>
        <g fontSize="110" filter="url(#excel-outline)">
            <Word letters={excel} y={626}/>
        </g>
    </svg>
);

export default function App() {
    return (
        <div className={clsx("relative flex h-[720px] w-[1280px] flex-col overflow-hidden bg-[#e6e6e6]", UI)}>
            <div className="relative bg-[#217346]">
                <TitleArt/>
                <TitleBar/>
                <RibbonTabs/>
            </div>
            <Ribbon/>
            <FormulaBar/>
            <div className="flex h-[524px] overflow-hidden">
                <div className="w-[1266px] overflow-hidden bg-white"><Sheet/></div>
                <VerticalScroll/>
            </div>
            <SheetTabs/>
            <StatusBar/>
            <Taskbar/>
            <Caption/>
        </div>
    );
}
